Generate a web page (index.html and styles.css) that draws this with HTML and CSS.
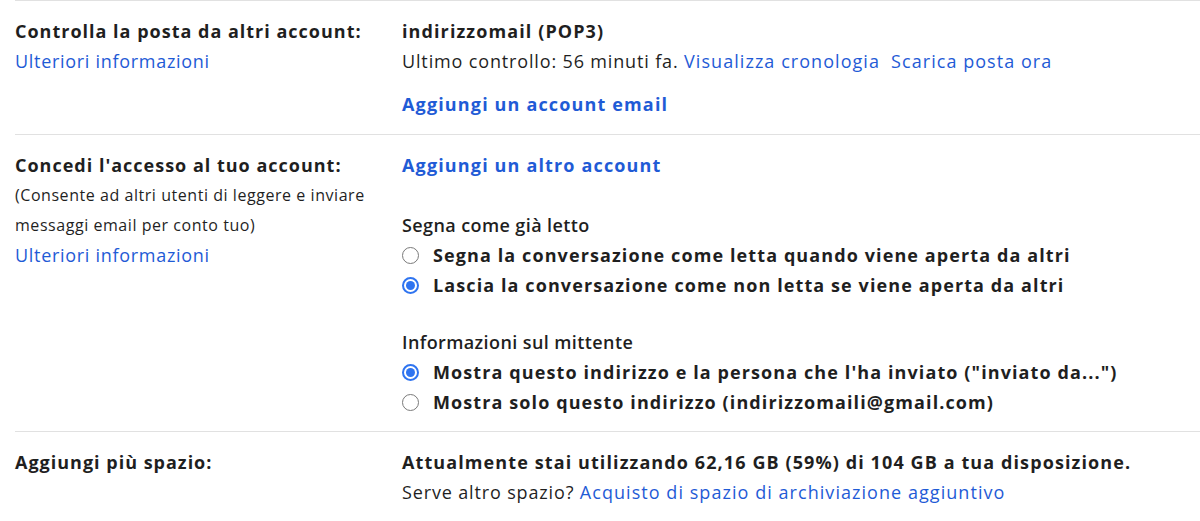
FILE: index.html
```html
<!DOCTYPE html>
<html lang="it">
<head>
<meta charset="utf-8">
<title>Impostazioni</title>
<link rel="stylesheet" href="styles.css">
</head>
<body>
<div class="settings">
  <section class="row">
    <div class="label-col">
      <div class="label">Controlla la posta da altri account:</div>
      <a class="link" href="#">Ulteriori informazioni</a>
    </div>
    <div class="value-col">
      <div class="strong">indirizzomail (POP3)</div>
      <div class="line">Ultimo controllo: 56 minuti fa. <a class="link" href="#">Visualizza cronologia</a>&nbsp; <a class="link" href="#">Scarica posta ora</a></div>
      <a class="link strong-link gap-13" href="#">Aggiungi un account email</a>
    </div>
  </section>

  <section class="row">
    <div class="label-col">
      <div class="label">Concedi l'accesso al tuo account:</div>
      <div class="desc">(Consente ad altri utenti di leggere e inviare messaggi email per conto tuo)</div>
      <a class="link" href="#">Ulteriori informazioni</a>
    </div>
    <div class="value-col">
      <a class="link strong-link" href="#">Aggiungi un altro account</a>
      <div class="group-title gap-30">Segna come già letto</div>
      <label class="radio"><span class="dot"></span>Segna la conversazione come letta quando viene aperta da altri</label>
      <label class="radio"><span class="dot on"></span>Lascia la conversazione come non letta se viene aperta da altri</label>
      <div class="group-title gap-27">Informazioni sul mittente</div>
      <label class="radio"><span class="dot on"></span>Mostra questo indirizzo e la persona che l'ha inviato ("inviato da...")</label>
      <label class="radio"><span class="dot"></span>Mostra solo questo indirizzo (indirizzomaili@gmail.com)</label>
    </div>
  </section>

  <section class="row last">
    <div class="label-col">
      <div class="label">Aggiungi più spazio:</div>
    </div>
    <div class="value-col">
      <div class="strong">Attualmente stai utilizzando 62,16 GB (59%) di 104 GB a tua disposizione.</div>
      <div class="line">Serve altro spazio? <a class="link" href="#">Acquisto di spazio di archiviazione aggiuntivo</a></div>
    </div>
  </section>
</div>
</body>
</html>
```

FILE: styles.css
```css
html, body {
  margin: 0;
  padding: 0;
  background: #ffffff;
}

body {
  font-family: "Open Sans", Roboto, "Liberation Sans", Arial, sans-serif;
  font-size: 18px;
  color: #1f1f1f;
}

.settings {
  padding-left: 15px;
}

.row {
  display: grid;
  grid-template-columns: 387px 1fr;
  border-top: 1px solid #e1e1e1;
  padding: 15px 0 15px;
}

.row:nth-child(2) {
  padding-bottom: 14px;
}

.row.last {
  padding-bottom: 20px;
}

.label-col,
.value-col {
  display: flex;
  flex-direction: column;
  align-items: flex-start;
}

.label {
  font-weight: 700;
  letter-spacing: 1px;
  line-height: 30px;
  white-space: nowrap;
}

.desc {
  font-size: 16px;
  letter-spacing: 0.55px;
  line-height: 30px;
  width: 372px;
}

.link {
  color: #1f5bd6;
  text-decoration: none;
  letter-spacing: 0.7px;
  line-height: 30px;
}

.line .link {
  line-height: inherit;
  letter-spacing: 1.05px;
}

.strong {
  font-weight: 700;
  letter-spacing: 1.1px;
  line-height: 30px;
  white-space: nowrap;
}

.line {
  letter-spacing: 0.85px;
  line-height: 30px;
  white-space: nowrap;
}

.strong-link {
  font-weight: 700;
  letter-spacing: 1.15px;
}

.group-title {
  font-weight: 600;
  letter-spacing: 0.4px;
  line-height: 30px;
}

.gap-13 { margin-top: 13px; }
.gap-30 { margin-top: 30px; }
.gap-27 { margin-top: 27px; }

.radio {
  display: flex;
  align-items: center;
  gap: 14px;
  font-weight: 700;
  letter-spacing: 1.1px;
  line-height: 30px;
  white-space: nowrap;
}

.dot {
  box-sizing: border-box;
  width: 17px;
  height: 17px;
  border-radius: 50%;
  border: 1.5px solid #7a7a7a;
  flex: none;
  position: relative;
}

.dot.on {
  border: 2px solid #2f74f0;
}

.dot.on::after {
  content: "";
  position: absolute;
  left: 50%;
  top: 50%;
  width: 9px;
  height: 9px;
  margin: -4.5px 0 0 -4.5px;
  border-radius: 50%;
  background: #2f74f0;
}
```
